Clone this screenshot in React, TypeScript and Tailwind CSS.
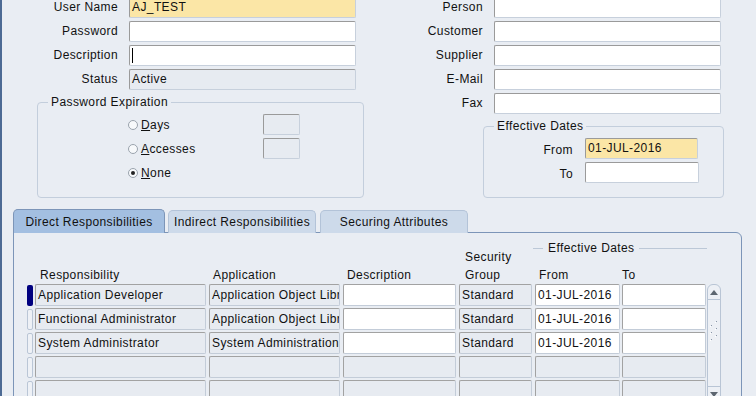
import type { ReactNode } from 'react';

// Oracle Forms "Users" window, lower half: user header fields plus the
// Direct Responsibilities tab with its multi-row block.

const FIELD =
  'h-[21px] rounded-[2px] border border-t-[#9a9a9a] border-l-[#9a9a9a] border-b-[#c7d0dc] border-r-[#c7d0dc] pl-[2px] leading-[19px] whitespace-nowrap overflow-hidden';

function Field({ w, tone = 'white', children }: { w: string; tone?: 'white' | 'yellow' | 'grey'; children?: ReactNode }) {
  const bg = tone === 'yellow' ? 'bg-[#fbe6a6]' : tone === 'grey' ? 'bg-[#e7ebf1]' : 'bg-white';
  return <div className={`${FIELD} ${bg} ${w}`}>{children}</div>;
}

function Row({ label, labelW, children }: { label: string; labelW: string; children: ReactNode }) {
  return (
    <div className="flex items-center mb-[3px]">
      <div className={`${labelW} h-[21px] text-right leading-[21px]`}>{label}</div>
      <div className="ml-[11px]">{children}</div>
    </div>
  );
}

function Radio({ checked, label, hot }: { checked?: boolean; label: string; hot: string }) {
  return (
    <div className="flex items-center w-[135px]">
      <span className="w-[10px] h-[10px] rounded-full border border-[#9aa3ad] bg-[#f7f9fb] flex items-center justify-center">
        {checked && <span className="w-[4px] h-[4px] rounded-full bg-[#222]" />}
      </span>
      <span className="ml-[3px]">
        <span className="underline">{hot}</span>
        {label.slice(hot.length)}
      </span>
    </div>
  );
}

const CELL =
  'h-[22px] rounded-[2px] border border-t-[#a2a2a2] border-l-[#a2a2a2] border-b-[#c3ccd8] border-r-[#c3ccd8] pl-[2px] leading-[20px] whitespace-nowrap overflow-hidden';

type Line = { resp: string; app: string; from: string; current?: boolean } | null;

const LINES: Line[] = [
  { resp: 'Application Developer', app: 'Application Object Library', from: '01-JUL-2016', current: true },
  { resp: 'Functional Administrator', app: 'Application Object Library', from: '01-JUL-2016' },
  { resp: 'System Administrator', app: 'System Administration', from: '01-JUL-2016' },
  null,
  null,
];

function TableRow({ line }: { line: Line }) {
  const open = line ? 'bg-white' : 'bg-[#e7ebf1]';
  return (
    <div className="flex">
      {line?.current ? (
        <div className="w-[6px] h-[21px] mt-[1px] rounded-[2px] bg-[#00007f]" />
      ) : (
        <div className="w-[6px] h-[21px] mt-[1px] rounded-[2px] border border-[#bac6d6] bg-[#eef1f6]" />
      )}
      <div className={`${CELL} ml-[2px] w-[171px] bg-[#e7ebf1]`}>{line?.resp}</div>
      <div className={`${CELL} ml-[3px] w-[131px] bg-[#e7ebf1]`}>{line?.app}</div>
      <div className={`${CELL} ml-[3px] w-[113px] ${open}`} />
      <div className={`${CELL} ml-[3px] w-[73px] bg-[#e7ebf1]`}>{line ? 'Standard' : ''}</div>
      <div className={`${CELL} ml-[3px] w-[85px] ${open}`}>{line?.from}</div>
      <div className={`${CELL} ml-[2px] w-[84px] ${open}`} />
    </div>
  );
}

function Scrollbar() {
  return (
    <div className="ml-[1px] w-[14px] h-[118px] rounded-t-[6px] border border-[#b9c5d5] bg-[#edf0f5] flex flex-col">
      <div className="h-[15px] border-b border-[#b9c5d5] flex items-center justify-center">
        <svg width="8" height="5" viewBox="0 0 8 5">
          <path d="M0 5 L4 0 L8 5 Z" fill="#5d6670" />
        </svg>
      </div>
      <div className="flex-1 flex items-center justify-center">
        <svg width="8" height="26" viewBox="0 0 8 26" className="-mt-[18px]">
          {[0, 7, 14].map((y) => (
            <g key={y}>
              <rect x="1" y={y + 4} width="1" height="1" fill="#8a97a8" />
              <rect x="0" y={y + 5} width="1" height="1" fill="#ffffff" />
              <rect x="6" y={y} width="1" height="1" fill="#8a97a8" />
              <rect x="5" y={y + 1} width="1" height="1" fill="#ffffff" />
            </g>
          ))}
        </svg>
      </div>
      <div className="h-[15px] border-t border-[#b9c5d5] flex items-center justify-center">
        <svg width="8" height="5" viewBox="0 0 8 5">
          <path d="M0 0 L8 0 L4 5 Z" fill="#5d6670" />
        </svg>
      </div>
    </div>
  );
}

export default function App() {
  return (
    <div className="relative w-[756px] h-[396px] overflow-hidden bg-[#e9edf3] border-l-2 border-[#4d6a94] font-['Liberation_Sans',Arial,sans-serif] text-[12px] tracking-[0.4px] text-[#111]">
      <div className="flex -mt-[3px]">
        {/* left column */}
        <div className="w-[368px]">
          <Row label="User Name" labelW="w-[116px]">
            <Field w="w-[227px]" tone="yellow">AJ_TEST</Field>
          </Row>
          <Row label="Password" labelW="w-[116px]">
            <Field w="w-[227px]" />
          </Row>
          <Row label="Description" labelW="w-[116px]">
            <Field w="w-[227px]">
              <span className="inline-block w-[1px] h-[15px] bg-black align-middle" />
            </Field>
          </Row>
          <Row label="Status" labelW="w-[116px]">
            <Field w="w-[227px]" tone="grey">Active</Field>
          </Row>

          <fieldset className="mt-[5px] ml-[35px] w-[327px] h-[103px] rounded-[4px] border border-[#c3cedc]">
            <legend className="ml-[10px] px-[3px] leading-[14px]">Password Expiration</legend>
            <div className="pt-[5px] pl-[90px]">
              <div className="flex items-center h-[21px] mb-[3px]">
                <Radio label="Days" hot="D" />
                <Field w="w-[37px]" tone="grey" />
              </div>
              <div className="flex items-center h-[21px] mb-[3px]">
                <Radio label="Accesses" hot="A" />
                <Field w="w-[37px]" tone="grey" />
              </div>
              <div className="flex items-center h-[21px]">
                <Radio label="None" hot="N" checked />
              </div>
            </div>
          </fieldset>
        </div>

        {/* right column */}
        <div>
          <Row label="Person" labelW="w-[113px]">
            <Field w="w-[227px]" />
          </Row>
          <Row label="Customer" labelW="w-[113px]">
            <Field w="w-[227px]" />
          </Row>
          <Row label="Supplier" labelW="w-[113px]">
            <Field w="w-[227px]" />
          </Row>
          <Row label="E-Mail" labelW="w-[113px]">
            <Field w="w-[227px]" />
          </Row>
          <Row label="Fax" labelW="w-[113px]">
            <Field w="w-[227px]" />
          </Row>

          <fieldset className="mt-[5px] ml-[113px] w-[241px] h-[79px] rounded-[4px] border border-[#c3cedc]">
            <legend className="ml-[10px] px-[3px] leading-[14px]">Effective Dates</legend>
            <div className="pt-[5px]">
              <div className="flex items-center mb-[3px]">
                <div className="w-[89px] h-[21px] text-right leading-[24px]">From</div>
                <div className="ml-[12px]">
                  <Field w="w-[113px]" tone="yellow">01-JUL-2016</Field>
                </div>
              </div>
              <div className="flex items-center">
                <div className="w-[89px] h-[21px] text-right leading-[24px]">To</div>
                <div className="ml-[12px]">
                  <Field w="w-[114px]" />
                </div>
              </div>
            </div>
          </fieldset>
        </div>
      </div>

      {/* tabs */}
      <div className="flex items-end mt-[11px] ml-[11px] h-[24px]">
        <div className="relative z-10 w-[152px] h-[24px] rounded-t-[5px] border border-b-0 border-[#7c95b8] bg-[#a3bfe1] text-center leading-[24px]">
          Direct Responsibilities
        </div>
        <div className="ml-[3px] w-[148px] h-[23px] rounded-t-[5px] border border-b-0 border-[#b3c3d8] bg-[#cddaea] text-center leading-[23px]">
          Indirect Responsibilities
        </div>
        <div className="ml-[4px] w-[148px] h-[23px] rounded-t-[5px] border border-b-0 border-[#b3c3d8] bg-[#cddaea] text-center leading-[23px]">
          Securing Attributes
        </div>
      </div>

      {/* tab page */}
      <div className="-mt-[1px] ml-[11px] w-[729px] h-[200px] rounded-tr-[6px] border border-[#7c95b8] bg-[#e9edf3] pl-[13px]">
        <div className="flex items-end h-[51px]">
          <div className="w-[6px]" />
          <div className="ml-[2px] w-[171px] pl-[5px] leading-[18px]">Responsibility</div>
          <div className="ml-[3px] w-[131px] pl-[4px] leading-[18px]">Application</div>
          <div className="ml-[3px] w-[113px] pl-[4px] leading-[18px]">Description</div>
          <div className="ml-[3px] w-[73px] pl-[6px] leading-[18px]">
            Security
            <br />
            Group
          </div>
          <div className="ml-[1px] w-[174px] h-[43px] flex flex-col justify-between">
            <div className="flex items-center leading-[14px]">
              <span className="w-[10px] h-px bg-[#bcc8d7]" />
              <span className="px-[5px]">Effective Dates</span>
              <span className="flex-1 h-px bg-[#bcc8d7]" />
            </div>
            <div className="flex leading-[18px]">
              <div className="w-[89px] pl-[6px]">From</div>
              <div>To</div>
            </div>
          </div>
        </div>

        <div className="flex">
          <div className="flex flex-col gap-[2px]">
            {LINES.map((line, i) => (
              <TableRow key={i} line={line} />
            ))}
          </div>
          <Scrollbar />
        </div>
      </div>
    </div>
  );
}
